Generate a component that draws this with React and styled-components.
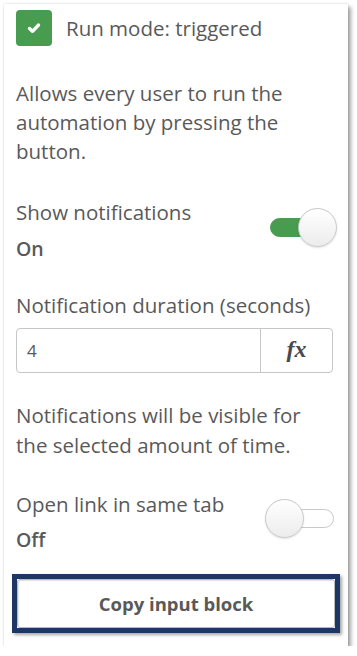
import React from "react";
import styled, { createGlobalStyle } from "styled-components";

const Global = createGlobalStyle`
  html, body { margin: 0; padding: 0; background: #fff; }
  body { font-family: "Open Sans", "Noto Sans", sans-serif; color: #595959; }
  * { box-sizing: border-box; }
`;

const Card = styled.div`
  margin: 4px 0 0 4px;
  width: 344px;
  height: 642px;
  background: #fff;
  box-shadow: 0 0 2px rgba(0, 0, 0, 0.18), 3px 3px 4px rgba(0, 0, 0, 0.35);
  padding: 6px 12px 13px 12px;
  display: flex;
  flex-direction: column;
`;

const Header = styled.div`
  display: flex;
  align-items: center;
  gap: 14px;
  height: 36px;
`;

const CheckBox = styled.div`
  width: 36px;
  height: 36px;
  border-radius: 4px;
  background: #489c50;
  display: flex;
  align-items: center;
  justify-content: center;
`;

const Title = styled.div`
  font-size: 20.5px;
  line-height: 36px;
  white-space: nowrap;
`;

const Text = styled.div`
  font-size: 20.5px;
  line-height: ${(p) => p.$lh || 30}px;
  margin-top: ${(p) => p.$mt || 0}px;
  white-space: ${(p) => (p.$nowrap ? "nowrap" : "normal")};
`;

const Value = styled.div`
  font-size: 19.5px;
  font-weight: 600;
  line-height: 30px;
  margin-top: ${(p) => p.$mt || 7}px;
`;

const SwitchRow = styled.div`
  display: flex;
  justify-content: space-between;
  align-items: flex-start;
  margin-top: ${(p) => p.$mt || 0}px;
`;

const Switch = styled.div`
  position: relative;
  flex: none;
  width: 72px;
  height: 39px;
  margin-top: ${(p) => p.$mt || 0}px;
  margin-right: -1px;
`;

const Track = styled.div`
  position: absolute;
  left: 5px;
  right: 3px;
  top: 10px;
  height: 19px;
  border-radius: 10px;
  background: ${(p) => (p.$on ? "#489c50" : "#fff")};
  border: 1px solid ${(p) => (p.$on ? "#489c50" : "#c9c9c9")};
`;

const Thumb = styled.div`
  position: absolute;
  top: 0;
  ${(p) => (p.$on ? "right: 0;" : "left: 0;")}
  width: 39px;
  height: 39px;
  border-radius: 50%;
  background: linear-gradient(180deg, #ffffff 0%, #ececec 100%);
  border: 1px solid #c8c8c8;
  box-shadow: 0 1px 2px rgba(0, 0, 0, 0.12);
`;

const InputGroup = styled.div`
  display: flex;
  height: 45px;
  margin-top: 8px;
  margin-right: 3px;
  border: 1px solid #c6c6c6;
  border-radius: 4px;
  overflow: hidden;
`;

const Field = styled.div`
  flex: 1;
  padding-left: 10px;
  display: flex;
  align-items: center;
  font-size: 17px;
  color: #595959;
`;

const FxButton = styled.div`
  width: 72px;
  border-left: 1px solid #c6c6c6;
  display: flex;
  align-items: center;
  justify-content: center;
  font-family: "Liberation Serif", "DejaVu Serif", serif;
  font-style: italic;
  font-weight: 700;
  font-size: 24px;
  color: #4a4a4a;
  padding-bottom: 2px;
`;

const Frame = styled.div`
  margin: 19px -4px 0 -4px;
  height: 59px;
  border: 5px solid #1d3764;
  box-shadow: 2px 2px 3px rgba(0, 0, 0, 0.35);
  display: flex;
`;

const Button = styled.div`
  flex: 1;
  border: 1px solid #b9b9b9;
  border-radius: 3px;
  box-shadow: inset 1px 1px 1px rgba(0, 0, 0, 0.12);
  display: flex;
  align-items: center;
  justify-content: center;
  font-size: 18.5px;
  font-weight: 700;
  color: #595959;
`;

const Check = () => (
  <svg width="16" height="16" viewBox="0 0 16 16">
    <path d="M3.5 8.5l3 2.8L12.5 5" fill="none" stroke="#fff" strokeWidth="3.4" strokeLinecap="round" strokeLinejoin="round" />
  </svg>
);

const Toggle = ({ on, mt }) => (
  <Switch $mt={mt}>
    <Track $on={on} />
    <Thumb $on={on} />
  </Switch>
);

export default function App() {
  return (
    <>
      <Global />
      <Card>
        <Header>
          <CheckBox>
            <Check />
          </CheckBox>
          <Title>Run mode: triggered</Title>
        </Header>
        <Text $mt={33} $lh={29}>
          Allows every user to run the automation by pressing the button.
        </Text>
        <SwitchRow $mt={31}>
          <div>
            <Text $nowrap>Show notifications</Text>
            <Value>On</Value>
          </div>
          <Toggle on mt={11} />
        </SwitchRow>
        <Text $mt={26} $nowrap>Notification duration (seconds)</Text>
        <InputGroup>
          <Field>4</Field>
          <FxButton>fx</FxButton>
        </InputGroup>
        <Text $mt={27}>Notifications will be visible for the selected amount of time.</Text>
        <SwitchRow $mt={29}>
          <div>
            <Text $nowrap>Open link in same tab</Text>
            <Value $mt={6}>Off</Value>
          </div>
          <Toggle mt={10} />
        </SwitchRow>
        <Frame>
          <Button>Copy input block</Button>
        </Frame>
      </Card>
    </>
  );
}
